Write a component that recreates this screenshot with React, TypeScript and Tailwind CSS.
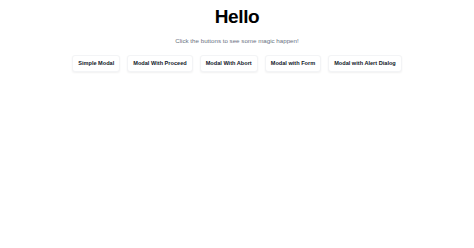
const buttons = [
  'Simple Modal',
  'Modal With Proceed',
  'Modal With Abort',
  'Modal with Form',
  'Modal with Alert Dialog',
];

export default function App() {
  return (
    <div className="min-h-[248px] bg-white font-['Liberation_Sans',Arial,sans-serif]">
      <div className="flex flex-col items-center pt-[6px]">
        <h1 className="text-[19px] font-bold leading-[22px] tracking-[-0.02em] text-black">Hello</h1>
        <p className="mt-[8px] text-[6.2px] leading-[9px] text-gray-500">
          Click the buttons to see some magic happen!
        </p>
        <div className="mt-[10px] flex gap-[7px]">
          {buttons.map((label) => (
            <button
              key={label}
              type="button"
              className="h-[17px] rounded-[3px] border border-gray-100 bg-white px-[5px] text-[5.6px] font-bold text-gray-900 shadow-[0_1px_2px_rgba(0,0,0,0.06)]"
            >
              {label}
            </button>
          ))}
        </div>
      </div>
    </div>
  );
}
